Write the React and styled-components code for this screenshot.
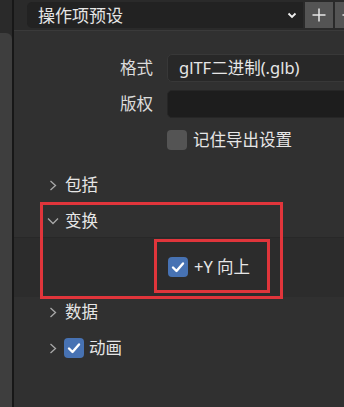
import React from 'react';
import styled, { createGlobalStyle } from 'styled-components';

const GlobalStyle = createGlobalStyle`
  html, body {
    margin: 0;
    padding: 0;
    background: #303030;
  }
  body {
    font-family: "Noto Sans", "Noto Sans CJK SC", sans-serif;
    color: #e6e6e6;
  }
`;

const Page = styled.div`
  width: 344px;
  height: 407px;
  display: flex;
  overflow: hidden;
  background: #303030;
`;

const Gutter = styled.div`
  width: 12px;
  flex: none;
  display: flex;
  flex-direction: column;
  background: #2a2a2a;
  border-right: 2px solid #171717;
`;

const Thumb = styled.div`
  flex: 1;
  margin-top: 33px;
  background: #3e3e3e;
  border-top-right-radius: 6px;
`;

const Main = styled.div`
  flex: 1;
  min-width: 0;
  display: flex;
  flex-direction: column;
  overflow: hidden;
`;

const Header = styled.div`
  height: 26px;
  padding: 2px 0;
  display: flex;
  align-items: stretch;
  gap: 2px;
  background: #2a2a2a;
  border-bottom: 1px solid #3a3a3a;
  padding-left: 13px;
`;

const Preset = styled.div`
  width: 276px;
  flex: none;
  box-sizing: border-box;
  display: flex;
  align-items: center;
  justify-content: space-between;
  padding: 0 6px 0 11px;
  background: #222222;
  border-radius: 5px 0 0 5px;
  font-size: 17px;
  line-height: 1;
  color: #e6e6e6;
`;

const HeadButton = styled.div`
  width: 28px;
  flex: none;
  display: flex;
  align-items: center;
  justify-content: center;
  background: #545454;
`;

const Props = styled.div`
  display: grid;
  grid-template-columns: 139px 1fr;
  column-gap: 14px;
  row-gap: 8px;
  padding-top: 23px;
  margin-right: -8px;
`;

const Label = styled.div`
  text-align: right;
  font-size: 16.5px;
  line-height: 28px;
  color: #dcdcdc;
`;

const Field = styled.div`
  height: 28px;
  box-sizing: border-box;
  display: flex;
  align-items: center;
  padding-left: 11px;
  border-radius: 5px;
  background: ${p => (p.$text ? '#1d1d1d' : '#282828')};
  border: 1px solid ${p => (p.$text ? '#262626' : '#383838')};
  font-size: 16.5px;
  line-height: 1;
  color: #e6e6e6;
`;

const CheckRow = styled.div`
  grid-column: 2;
  margin-top: 4px;
  display: flex;
  align-items: center;
  gap: 6px;
  font-size: 16.5px;
  line-height: 1;
  color: #e6e6e6;
`;

const Box = styled.div`
  width: 20px;
  height: 20px;
  flex: none;
  border-radius: 4px;
  display: flex;
  align-items: center;
  justify-content: center;
  background: ${p => (p.$on ? '#4772b3' : '#545454')};
`;

const Panels = styled.div`
  margin-top: 20px;
  display: flex;
  flex-direction: column;
`;

const PanelHeader = styled.div`
  height: 30px;
  margin-bottom: ${p => p.$gap}px;
  display: flex;
  align-items: center;
  padding-left: 33px;
  gap: ${p => (p.$check ? 5 : 6)}px;
  font-size: 16.5px;
  line-height: 1;
  color: #e6e6e6;
`;

const Chevron = styled.div`
  width: 12px;
  flex: none;
  display: flex;
  justify-content: center;
`;

const Group = styled.div`
  position: relative;
  display: flex;
  flex-direction: column;
`;

const SubPanel = styled.div`
  position: relative;
  margin-top: 1px;
  padding: 19px 0 20px 154px;
  background: #2c2c2c;
  border-top: 1px solid #282828;
  display: flex;
  align-items: center;
  gap: 6px;
  font-size: 16.5px;
  line-height: 1;
  color: #e6e6e6;
`;

const Mark = styled.div`
  position: absolute;
  z-index: 2;
  left: ${p => p.$left}px;
  top: ${p => p.$top}px;
  width: ${p => p.$w}px;
  height: ${p => p.$h}px;
  box-sizing: border-box;
  border: 3px solid #e0353b;
  pointer-events: none;
`;

const Right = () => (
  <svg width="8" height="11" viewBox="0 0 8 11">
    <polyline points="1.5,1 6.5,5.5 1.5,10" fill="none" stroke="#a8a8a8" strokeWidth="1.3" />
  </svg>
);

const Down = () => (
  <svg width="12" height="8" viewBox="0 0 12 8">
    <polyline points="1,1.5 6,6.5 11,1.5" fill="none" stroke="#a8a8a8" strokeWidth="1.3" />
  </svg>
);

const Tick = () => (
  <svg width="14" height="12" viewBox="0 0 14 12">
    <polyline points="2,6.5 5.5,10 12,2.5" fill="none" stroke="#ffffff" strokeWidth="2.4" strokeLinecap="round" strokeLinejoin="round" />
  </svg>
);

const Check = ({ on }) => <Box $on={on}>{on && <Tick />}</Box>;

export default function App() {
  return (
    <Page>
      <GlobalStyle />
      <Gutter>
        <Thumb />
      </Gutter>
      <Main>
        <Header>
          <Preset>
            操作项预设
            <svg width="10" height="7" viewBox="0 0 10 7">
              <polyline points="1.5,1.5 5,5 8.5,1.5" fill="none" stroke="#f0f0f0" strokeWidth="1.8" />
            </svg>
          </Preset>
          <HeadButton>
            <svg width="14" height="14" viewBox="0 0 14 14">
              <path d="M7 0.5V13.5M0.5 7H13.5" stroke="#e6e6e6" strokeWidth="1.5" />
            </svg>
          </HeadButton>
          <HeadButton>
            <svg width="14" height="14" viewBox="0 0 14 14">
              <path d="M0.5 7H13.5" stroke="#e6e6e6" strokeWidth="1.5" />
            </svg>
          </HeadButton>
        </Header>

        <Props>
          <Label>格式</Label>
          <Field>glTF二进制(.glb)</Field>
          <Label>版权</Label>
          <Field $text />
          <CheckRow>
            <Check />
            记住导出设置
          </CheckRow>
        </Props>

        <Panels>
          <PanelHeader $gap={6}>
            <Chevron><Right /></Chevron>
            包括
          </PanelHeader>
          <Group>
            <Mark $left={26} $top={-4} $w={243} $h={97} />
            <PanelHeader $gap={0}>
              <Chevron><Down /></Chevron>
              变换
            </PanelHeader>
            <SubPanel>
              <Check on />
              +Y 向上
              <Mark $left={140} $top={1} $w={116} $h={54} />
            </SubPanel>
          </Group>
          <PanelHeader $gap={6}>
            <Chevron><Right /></Chevron>
            数据
          </PanelHeader>
          <PanelHeader $gap={0} $check>
            <Chevron><Right /></Chevron>
            <Check on />
            动画
          </PanelHeader>
        </Panels>
      </Main>
    </Page>
  );
}
